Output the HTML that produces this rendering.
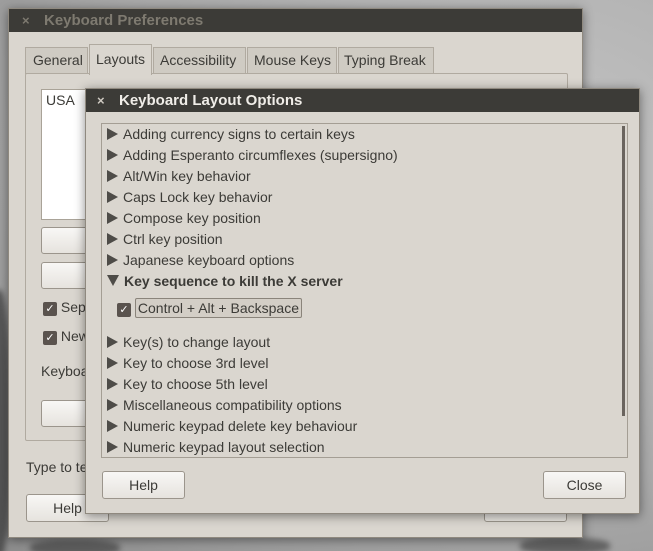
<!DOCTYPE html>
<html><head><style>
*{box-sizing:border-box;margin:0;padding:0}
html,body{width:653px;height:551px;overflow:hidden}
body{position:relative;font-family:"Liberation Sans","DejaVu Sans",sans-serif;font-size:14px;color:#3c3b37;
background:radial-gradient(ellipse at 80% 30%,#c4c4c4 0%,#a9a9a9 60%,#8d8d8d 100%);}
.abs{position:absolute}
.dark{background:#3a3a3a;border-radius:40%;filter:blur(3px)}
.win{position:absolute;background:#dad6cf;box-shadow:0 2px 10px rgba(0,0,0,.45);border:1px solid #8f897f}
.tb{position:absolute;left:0;right:0;top:0;height:23px;background:#3c3b37;font-weight:bold;font-size:15px;}
.btn{position:absolute;border:1px solid #9b958c;border-radius:3px;background:linear-gradient(#f8f7f5,#e6e3de);text-align:center;line-height:25px;color:#3c3b37}
.tri{display:inline-block;width:0;height:0;border-top:6px solid transparent;border-bottom:6px solid transparent;border-left:11px solid #4e4c48;margin-right:5px;vertical-align:-1px}
.trid{display:inline-block;width:0;height:0;border-left:6px solid transparent;border-right:6px solid transparent;border-top:11px solid #4e4c48;margin-right:5px;vertical-align:0}
.row{position:absolute;left:5px;height:21px;line-height:21px;white-space:nowrap}
.cb{display:inline-block;width:14px;height:14px;background:#5a534e;border-radius:2px;color:#fff;font-size:11px;line-height:14px;text-align:center}
</style></head><body>
<div class="abs dark" style="left:-14px;top:290px;width:24px;height:270px;opacity:.7"></div>
<div class="abs dark" style="left:30px;top:540px;width:90px;height:16px;opacity:.6"></div>
<div class="abs dark" style="left:520px;top:538px;width:90px;height:16px;opacity:.6"></div>

<!-- back window -->
<div class="win" style="left:8px;top:8px;width:575px;height:530px">
 <div class="tb" style="color:#7e7a70"><span style="position:absolute;left:13px;top:4px;font-size:13px">×</span><span style="position:absolute;left:35px;top:3px">Keyboard Preferences</span></div>
 <div class="abs" style="left:16px;top:64px;width:543px;height:368px;border:1px solid #b0aaa0;border-radius:2px"></div>
 <div class="abs" style="left:16px;top:38px;width:63px;height:27px;background:#cfcbc3;border:1px solid #b0aaa0;line-height:25px;padding-left:7px">General</div>
 <div class="abs" style="left:80px;top:35px;width:63px;height:31px;background:#dad6cf;border:1px solid #b0aaa0;border-bottom:none;line-height:29px;padding-left:6px">Layouts</div>
 <div class="abs" style="left:144px;top:38px;width:93px;height:27px;background:#cfcbc3;border:1px solid #b0aaa0;line-height:25px;padding-left:6px">Accessibility</div>
 <div class="abs" style="left:238px;top:38px;width:90px;height:27px;background:#cfcbc3;border:1px solid #b0aaa0;line-height:25px;padding-left:6px">Mouse Keys</div>
 <div class="abs" style="left:329px;top:38px;width:96px;height:27px;background:#cfcbc3;border:1px solid #b0aaa0;line-height:25px;padding-left:5px">Typing Break</div>
 <div class="abs" style="left:32px;top:80px;width:115px;height:131px;background:#fff;border:1px solid #a9a398;padding:2px 4px">USA</div>
 <div class="btn" style="left:32px;top:218px;width:400px;height:27px"></div>
 <div class="btn" style="left:32px;top:253px;width:400px;height:27px"></div>
 <div class="abs" style="left:34px;top:290px"><span class="cb">✓</span> Sep</div>
 <div class="abs" style="left:34px;top:319px"><span class="cb">✓</span> New</div>
 <div class="abs" style="left:32px;top:354px">Keyboard</div>
 <div class="btn" style="left:32px;top:391px;width:400px;height:27px"></div>
 <div class="abs" style="left:17px;top:450px">Type to test</div>
 <div class="btn" style="left:17px;top:485px;width:83px;height:28px;line-height:26px">Help</div>
 <div class="btn" style="left:475px;top:485px;width:83px;height:28px"></div>
</div>

<!-- front dialog -->
<div class="win" style="left:85px;top:88px;width:555px;height:426px">
 <div class="tb" style="color:#f0ede8"><span style="position:absolute;left:11px;top:4px;font-size:13px;color:#cfcac2">×</span><span style="position:absolute;left:33px;top:3px">Keyboard Layout Options</span></div>
 <div class="abs" style="left:15px;top:34px;width:527px;height:335px;border:1px solid #a49e94">
  <div class="abs" style="right:2px;top:2px;width:3px;height:290px;background:#6a645e"></div>
  <div class="row" style="top:0"><span class="tri"></span>Adding currency signs to certain keys</div>
  <div class="row" style="top:21px"><span class="tri"></span>Adding Esperanto circumflexes (supersigno)</div>
  <div class="row" style="top:42px"><span class="tri"></span>Alt/Win key behavior</div>
  <div class="row" style="top:63px"><span class="tri"></span>Caps Lock key behavior</div>
  <div class="row" style="top:84px"><span class="tri"></span>Compose key position</div>
  <div class="row" style="top:105px"><span class="tri"></span>Ctrl key position</div>
  <div class="row" style="top:126px"><span class="tri"></span>Japanese keyboard options</div>
  <div class="row" style="top:147px;font-weight:bold"><span class="trid"></span>Key sequence to kill the X server</div>
  <div class="row" style="left:15px;top:174px"><span class="cb">✓</span> <span style="border:1px solid #8a847b;border-radius:2px;background:#d3cec6;padding:1px 2px">Control + Alt + Backspace</span></div>
  <div class="row" style="top:208px"><span class="tri"></span>Key(s) to change layout</div>
  <div class="row" style="top:229px"><span class="tri"></span>Key to choose 3rd level</div>
  <div class="row" style="top:250px"><span class="tri"></span>Key to choose 5th level</div>
  <div class="row" style="top:271px"><span class="tri"></span>Miscellaneous compatibility options</div>
  <div class="row" style="top:292px"><span class="tri"></span>Numeric keypad delete key behaviour</div>
  <div class="row" style="top:313px"><span class="tri"></span>Numeric keypad layout selection</div>
 </div>
 <div class="btn" style="left:16px;top:382px;width:83px;height:28px;line-height:26px">Help</div>
 <div class="btn" style="left:457px;top:382px;width:83px;height:28px;line-height:26px">Close</div>
</div>
</body></html>
